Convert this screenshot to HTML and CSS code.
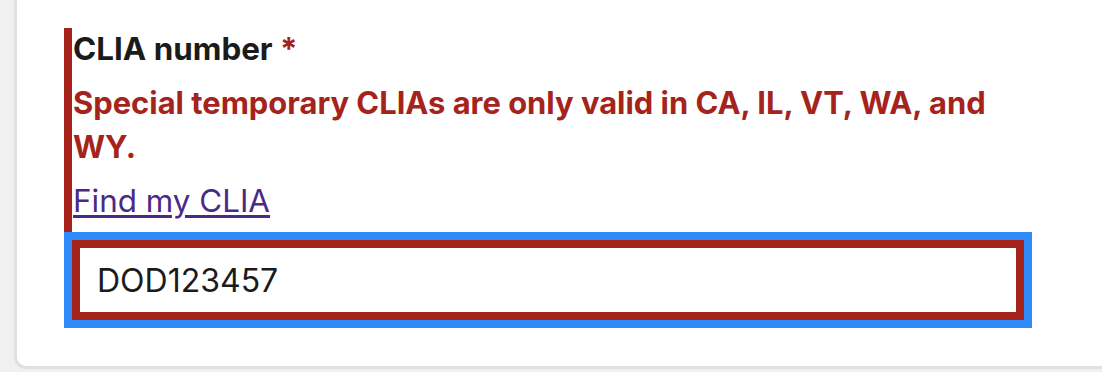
FILE: index.html
```html
<!DOCTYPE html>
<html lang="en">
<head>
<meta charset="utf-8">
<title>CLIA number</title>
<link rel="stylesheet" href="styles.css">
</head>
<body>
<div class="card">
  <div class="form-group">
    <label class="label" for="clia">CLIA number <abbr class="required" title="required">*</abbr></label>
    <span class="error-message">Special temporary CLIAs are only valid in CA, IL, VT, WA, and WY.</span>
    <a class="link" href="#">Find my CLIA</a>
    <input class="input" id="clia" type="text" value="DOD123457">
  </div>
</div>
</body>
</html>
```

FILE: styles.css
```css
html, body {
  margin: 0;
  padding: 0;
}
body {
  background: #f0f0f0;
  width: 1102px;
  height: 372px;
  overflow: hidden;
  font-family: "Inter", "Liberation Sans", sans-serif;
  color: #1b1b1b;
}
.card {
  margin-left: 14px;
  height: 369px;
  box-sizing: border-box;
  background: #ffffff;
  border-left: 3px solid #dfe1e2;
  border-bottom: 3px solid #dfe1e2;
  border-bottom-left-radius: 12px;
  padding: 28px 0 0 47px;
}
.form-group {
  width: 961px;
  box-sizing: border-box;
  border-left: 8px solid #a5231b;
  padding-left: 1px;
  display: flex;
  flex-direction: column;
  align-items: flex-start;
}
.label {
  font-size: 31.4px;
  font-weight: 700;
  line-height: 40px;
  padding-top: 1px;
}
.required {
  color: #a5231b;
  text-decoration: none;
  border: 0;
}
.error-message {
  margin-top: 12px;
  font-size: 30.9px;
  font-weight: 700;
  line-height: 44px;
  color: #a5231b;
}
.link {
  margin-top: 10px;
  font-size: 31.4px;
  line-height: 44px;
  color: #4a2a86;
  text-decoration: underline;
  text-underline-offset: 3px;
  text-decoration-thickness: 3px;
}
.input {
  margin-top: 17px;
  width: 100%;
  height: 80px;
  box-sizing: border-box;
  border: 8px solid #a5231b;
  outline: 8px solid #2e8af7;
  outline-offset: 0;
  padding: 0 0 0 17px;
  font-family: inherit;
  font-size: 32px;
  color: #1b1b1b;
  background: #fff;
  margin-left: -1px;
}
```
